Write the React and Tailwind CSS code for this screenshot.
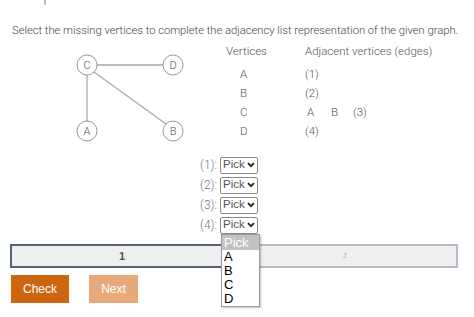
import React from "react";

function Pick({ label }) {
  return (
    <div className="flex items-center h-[20px]">
      <span className="w-[35px] text-right pr-[3px] text-[12px] text-[#777]">
        {label}
      </span>
      <div className="flex items-center justify-between w-[38px] h-[17px] border border-[#8a8a8a] rounded-[2px] bg-white pl-[2px] pr-[2px]">
        <span className="text-[11.5px] leading-none text-[#555] font-['Liberation_Sans',sans-serif]">Pick</span>
        <svg width="8" height="6" viewBox="0 0 8 6">
          <path d="M1 1.2 L4 4.2 L7 1.2" stroke="#222" strokeWidth="1.8" fill="none" />
        </svg>
      </div>
    </div>
  );
}

function Node({ x, y, t }) {
  return (
    <g>
      <circle cx={x} cy={y} r="10" fill="white" stroke="#999" strokeWidth="1" />
      <text x={x} y={y + 4} textAnchor="middle" fontSize="11" fill="#555" fontFamily="Roboto, sans-serif" fontWeight="300">
        {t}
      </text>
    </g>
  );
}

export default function App() {
  return (
    <div className="w-[474px] h-[317px] bg-white relative overflow-hidden font-['Roboto',sans-serif] text-[#555]">
      <div className="h-[5px] pl-[44px]">
        <div className="w-[2px] h-[5px] bg-[#bbb]" />
      </div>
      <div className="pl-[12px] pt-[18px] text-[11.2px] font-light text-[#444] leading-[16px] whitespace-nowrap">
        Select the missing vertices to complete the adjacency list representation of the given graph.
      </div>
      <div className="flex h-[116px]">
        <svg width="226" height="116" viewBox="0 39 226 116" className="shrink-0">
          <line x1="97" y1="65" x2="163" y2="65" stroke="#aaa" strokeWidth="1.3" />
          <line x1="87" y1="75" x2="87" y2="121" stroke="#aaa" strokeWidth="1.3" />
          <line x1="94" y1="72" x2="166" y2="124" stroke="#aaa" strokeWidth="1.3" />
          <Node x={87} y={65} t="C" />
          <Node x={173} y={65} t="D" />
          <Node x={87} y={131} t="A" />
          <Node x={173} y={131} t="B" />
        </svg>
        <div className="pt-[3px] text-[11.5px] font-light text-[#555] leading-[19px]">
          <div className="flex">
            <div className="w-[79px]">Vertices</div>
            <div>Adjacent vertices (edges)</div>
          </div>
          <div className="flex mt-[4px]">
            <div className="w-[79px] pl-[14px]">A</div>
            <div>(1)</div>
          </div>
          <div className="flex">
            <div className="w-[79px] pl-[14px]">B</div>
            <div>(2)</div>
          </div>
          <div className="flex">
            <div className="w-[79px] pl-[14px]">C</div>
            <div className="flex pl-[2px]">
              <span className="w-[24px]">A</span>
              <span className="w-[22px]">B</span>
              <span>(3)</span>
            </div>
          </div>
          <div className="flex">
            <div className="w-[79px] pl-[14px]">D</div>
            <div>(4)</div>
          </div>
        </div>
      </div>
      <div className="pl-[185px] flex flex-col font-['Roboto',sans-serif] font-light">
        <Pick label="(1):" />
        <Pick label="(2):" />
        <Pick label="(3):" />
        <div className="relative">
          <Pick label="(4):" />
          <div className="absolute left-[36px] top-[19px] w-[39px] z-10 bg-white border border-[#9a9a9a] shadow-[1px_1px_2px_rgba(0,0,0,0.25)] font-['Liberation_Sans',sans-serif] text-[13px] text-black leading-[14px] font-normal">
            <div className="bg-[#c2c2c2] text-white px-[2px] h-[15px] leading-[15px]">Pick</div>
            <div className="px-[2px]">A</div>
            <div className="px-[2px]">B</div>
            <div className="px-[2px]">C</div>
            <div className="px-[2px]">D</div>
          </div>
        </div>
      </div>
      <div className="flex mx-[10px] mt-[9px] w-[448px] h-[24px]">
        <div className="w-[224px] h-full border-2 border-[#56647a] bg-[#efefef] flex items-center justify-center text-[11px] text-[#555] font-['Liberation_Sans',sans-serif] font-bold">
          1
        </div>
        <div className="flex-1 h-full border-2 border-l-0 border-[#b3bdca] bg-[#efefef] flex items-center justify-center text-[7px] text-[#aaa] font-['Liberation_Sans',sans-serif]">
          2
        </div>
      </div>
      <div className="flex gap-[20px] ml-[11px] mt-[7px]">
        <div className="w-[58px] h-[28px] bg-[#cc6410] text-white text-[12px] flex items-center justify-center font-['Liberation_Sans',sans-serif]">
          Check
        </div>
        <div className="w-[49px] h-[28px] bg-[#e8a97a] text-white text-[12px] flex items-center justify-center font-['Liberation_Sans',sans-serif]">
          Next
        </div>
      </div>
    </div>
  );
}
